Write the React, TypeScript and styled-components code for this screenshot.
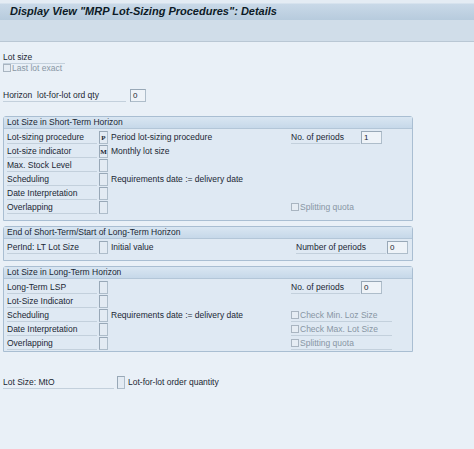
import styled, { createGlobalStyle } from "styled-components";
import { ReactNode } from "react";

const GlobalStyle = createGlobalStyle`
  html, body {
    margin: 0;
    padding: 0;
    background: #e9f0f7;
  }
  body {
    font-family: "Liberation Sans", Arial, sans-serif;
    font-size: 8.5px;
    color: #1a2733;
  }
`;

const Page = styled.div`
  width: 474px;
  height: 449px;
  display: flex;
  flex-direction: column;
  background: #e9f0f7;
  overflow: hidden;
`;

const TitleBar = styled.div`
  height: 20px;
  box-sizing: border-box;
  padding: 5px 0 0 10px;
  background: linear-gradient(#e4ecf4 0px, #e4ecf4 3px, #c9d9e8 4px, #b7cbdd 20px);
  font-size: 11px;
  font-weight: bold;
  font-style: italic;
  color: #0c1a26;
  line-height: 12px;
  white-space: nowrap;
`;

const Toolbar = styled.div`
  height: 21px;
  background: #d0dde9;
  border-bottom: 1px solid #b9c7d4;
`;

const Content = styled.div`
  display: flex;
  flex-direction: column;
  padding: 10px 0 0 3px;
`;

const Line = styled.div<{ $top?: number }>`
  display: flex;
  align-items: center;
  height: 14px;
  margin-top: ${(p) => p.$top ?? 0}px;
`;

const Label = styled.div<{ $w: number }>`
  width: ${(p) => p.$w}px;
  height: 13px;
  line-height: 12px;
  box-sizing: border-box;
  border-bottom: 1px solid #c3d0dc;
  white-space: nowrap;
  flex-shrink: 0;
`;

const Box = styled.div<{ $w?: number; $ml?: number }>`
  width: ${(p) => p.$w ?? 9}px;
  height: 13px;
  margin-left: ${(p) => p.$ml ?? 2}px;
  box-sizing: border-box;
  border: 1px solid #aebdca;
  border-top-color: #98a8b7;
  border-left-color: #98a8b7;
  background: #e3ebf3;
  flex-shrink: 0;
  font-size: 8px;
  line-height: 11px;
  padding-left: 2px;
  overflow: hidden;
`;

const ValueBox = styled(Box)`
  background: #eef3f8;
`;

const KeyBox = styled(Box)`
  padding-left: 0;
  text-align: center;
`;

const KeyGlyph = styled.span`
  font-family: "Liberation Serif", serif;
  font-weight: bold;
  font-size: 7px;
`;

const Desc = styled.div`
  margin-left: 3px;
  white-space: nowrap;
`;

const Check = styled.div<{ $w?: number }>`
  display: flex;
  align-items: center;
  gap: 1px;
  color: #8896a4;
  width: ${(p) => (p.$w ? `${p.$w}px` : "auto")};
  height: 13px;
  box-sizing: border-box;
  white-space: nowrap;
  &::before {
    content: "";
    width: 8px;
    height: 8px;
    box-sizing: border-box;
    border: 1px solid #a9b5c1;
    background: #e6edf4;
  }
`;

const UnderCheck = styled(Check)`
  border-bottom: 1px solid #c3d0dc;
`;

const Group = styled.div<{ $h: number; $top: number }>`
  width: 410px;
  height: ${(p) => p.$h}px;
  margin-top: ${(p) => p.$top}px;
  box-sizing: border-box;
  border: 1px solid #a9bed2;
  border-radius: 3px 3px 0 0;
  background: #dfe9f3;
  display: flex;
  flex-direction: column;
`;

const GroupHead = styled.div`
  height: 11px;
  line-height: 11px;
  padding-left: 3px;
  background: linear-gradient(#d9e6f2, #c6d8e9);
  border-bottom: 1px solid #b3c6d8;
  white-space: nowrap;
`;

const GroupBody = styled.div<{ $pt: number }>`
  display: flex;
  flex-direction: column;
  padding: ${(p) => p.$pt}px 0 0 3px;
`;

const Row = styled.div`
  display: grid;
  grid-template-columns: 90px 194px 123px;
  align-items: center;
  height: 14px;
`;

const Left = styled.div`
  display: flex;
  align-items: center;
`;

const Right = styled.div<{ $pl?: number }>`
  display: flex;
  align-items: center;
  padding-left: ${(p) => p.$pl ?? 0}px;
`;

type FieldProps = {
  label: string;
  code?: string;
  desc?: string;
  right?: ReactNode;
};

function Field({ label, code, desc, right }: FieldProps) {
  return (
    <Row>
      <Label $w={90}>{label}</Label>
      <Left>
        {code ? (
          <KeyBox>
            <KeyGlyph>{code}</KeyGlyph>
          </KeyBox>
        ) : (
          <Box />
        )}
        {desc && <Desc>{desc}</Desc>}
      </Left>
      {right ?? <div />}
    </Row>
  );
}

function Periods({ label, w, value, pl }: { label: string; w: number; value: string; pl?: number }) {
  return (
    <Right $pl={pl}>
      <Label $w={w}>{label}</Label>
      <ValueBox $w={21} $ml={1}>
        {value}
      </ValueBox>
    </Right>
  );
}

function Option({ text }: { text: string }) {
  return (
    <Right>
      <UnderCheck $w={101}>{text}</UnderCheck>
    </Right>
  );
}

export default function App() {
  return (
    <Page>
      <GlobalStyle />
      <TitleBar>Display View "MRP Lot-Sizing Procedures": Details</TitleBar>
      <Toolbar />
      <Content>
        <Line $top={-2}>
          <Label $w={62}>Lot size</Label>
        </Line>
        <Line $top={-3}>
          <Check>Last lot exact</Check>
        </Line>
        <Line $top={13}>
          <Label $w={123}>Horizon&nbsp; lot-for-lot ord qty</Label>
          <ValueBox $w={16} $ml={4}>
            0
          </ValueBox>
        </Line>

        <Group $top={14} $h={105}>
          <GroupHead>Lot Size in Short-Term Horizon</GroupHead>
          <GroupBody $pt={1}>
            <Field
              label="Lot-sizing procedure"
              code="P"
              desc="Period lot-sizing procedure"
              right={<Periods label="No. of periods" w={69} value="1" />}
            />
            <Field label="Lot-size indicator" code="M" desc="Monthly lot size" />
            <Field label="Max. Stock Level" />
            <Field label="Scheduling" desc="Requirements date := delivery date" />
            <Field label="Date Interpretation" />
            <Field
              label="Overlapping"
              right={
                <Right>
                  <Check>Splitting quota</Check>
                </Right>
              }
            />
          </GroupBody>
        </Group>

        <Group $top={5} $h={35}>
          <GroupHead>End of Short-Term/Start of Long-Term Horizon</GroupHead>
          <GroupBody $pt={1}>
            <Field
              label="PerInd: LT Lot Size"
              desc="Initial value"
              right={<Periods label="Number of periods" w={90} value="0" pl={5} />}
            />
          </GroupBody>
        </Group>

        <Group $top={5} $h={86}>
          <GroupHead>Lot Size in Long-Term Horizon</GroupHead>
          <GroupBody $pt={1}>
            <Field label="Long-Term LSP" right={<Periods label="No. of periods" w={69} value="0" />} />
            <Field label="Lot-Size Indicator" />
            <Field
              label="Scheduling"
              desc="Requirements date := delivery date"
              right={<Option text="Check Min. Loz Size" />}
            />
            <Field label="Date Interpretation" right={<Option text="Check Max. Lot Size" />} />
            <Field label="Overlapping" right={<Option text="Splitting quota" />} />
          </GroupBody>
        </Group>

        <Line $top={23}>
          <Label $w={111}>Lot Size: MtO</Label>
          <Box $w={8} $ml={3} />
          <Desc>Lot-for-lot order quantity</Desc>
        </Line>
      </Content>
    </Page>
  );
}
